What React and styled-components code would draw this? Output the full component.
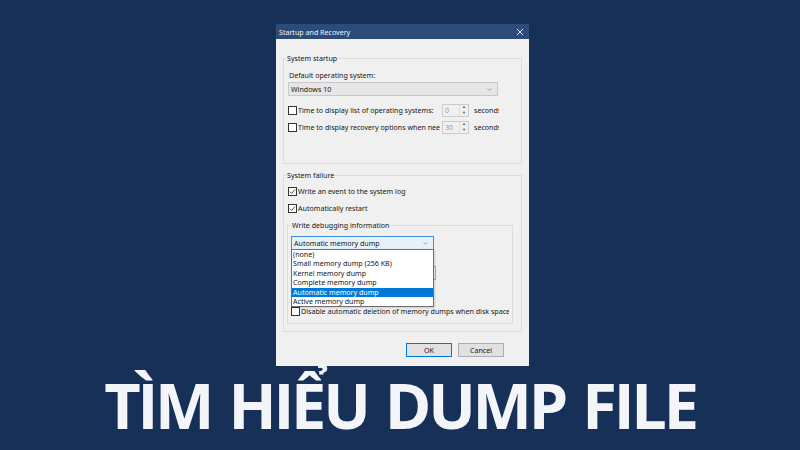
import styled, { createGlobalStyle } from "styled-components";

const GlobalStyle = createGlobalStyle`
  html, body {
    margin: 0;
    padding: 0;
    background: #163058;
  }
`;

const Page = styled.div`
  width: 800px;
  height: 450px;
  background: #163058;
  display: flex;
  flex-direction: column;
  align-items: center;
  padding-top: 24px;
  box-sizing: border-box;
  overflow: hidden;
`;

const Dialog = styled.div`
  width: 253px;
  height: 342px;
  margin-left: 5px;
  background: #f0f0f0;
  display: flex;
  flex-direction: column;
  font-family: "Noto Sans", "Open Sans", sans-serif;
  font-size: 7.1px;
  line-height: 10px;
  color: #161616;
  box-sizing: border-box;
`;

const TitleBar = styled.div`
  height: 15px;
  flex-shrink: 0;
  background: #2d4b79;
  color: #f2f4f8;
  display: flex;
  align-items: center;
  justify-content: space-between;
  padding: 0 6px 0 3px;
`;

const CloseIcon = styled.svg`
  width: 6px;
  height: 6px;
  stroke: #e8ecf2;
  stroke-width: 1;
`;

const Body = styled.div`
  padding: 14px 7px 0 7px;
  display: flex;
  flex-direction: column;
`;

const Group = styled.fieldset`
  margin: ${(p) => p.$mt || 0}px 0 0 ${(p) => p.$ml || 0}px;
  padding: 0 ${(p) => p.$px ?? 5}px 0 ${(p) => p.$px ?? 5}px;
  border: 1px solid #dcdcdc;
  min-width: 0;
  box-sizing: border-box;
  height: ${(p) => p.$h}px;
  width: ${(p) => (p.$w ? `${p.$w}px` : "auto")};
`;

const Legend = styled.legend`
  padding: 0 1px;
  margin-left: ${(p) => p.$ml ?? -3}px;
  line-height: 10px;
`;

const Label = styled.div`
  margin-top: ${(p) => p.$mt || 0}px;
  white-space: nowrap;
`;

const Select = styled.div`
  position: relative;
  margin-top: ${(p) => p.$mt || 0}px;
  margin-left: ${(p) => p.$ml || 0}px;
  width: ${(p) => p.$w}px;
  height: 14px;
  box-sizing: border-box;
  border: 1px solid ${(p) => (p.$open ? "#3c8fd9" : "#c8c8c8")};
  background: ${(p) => (p.$open ? "#e5f1fb" : "#e6e6e6")};
  display: flex;
  align-items: center;
  justify-content: space-between;
  padding: 0 5px 0 2px;
`;

const Chevron = styled.svg`
  width: 5px;
  height: 3px;
  stroke: #6a6a6a;
  stroke-width: 0.8;
  fill: none;
`;

const Row = styled.div`
  display: flex;
  align-items: center;
  height: ${(p) => p.$h || 12}px;
  margin-top: ${(p) => p.$mt || 0}px;
  margin-left: ${(p) => p.$ml || 0}px;
  white-space: nowrap;
`;

const Box = styled.span`
  width: 9px;
  height: 9px;
  box-sizing: border-box;
  border: 1px solid #333;
  background: #fff;
  margin-right: 1px;
  flex-shrink: 0;
  display: flex;
  align-items: center;
  justify-content: center;
`;

const Tick = styled.svg`
  width: 7px;
  height: 7px;
  stroke: #222;
  stroke-width: 0.9;
  fill: none;
`;

const RowText = styled.span`
  display: inline-block;
  width: ${(p) => (p.$w ? `${p.$w}px` : "auto")};
  overflow: hidden;
  white-space: nowrap;
`;

const Spin = styled.div`
  display: flex;
  align-items: center;
  width: 27px;
  height: 13px;
  box-sizing: border-box;
  border: 1px solid #cccccc;
  background: #f0f0f0;
  margin-left: 2px;
  color: #9a9a9a;
  padding-left: 2px;
`;

const SpinValue = styled.span`
  flex: 1;
`;

const SpinArrows = styled.div`
  width: 8px;
  height: 11px;
  border-left: 1px solid #e0e0e0;
  display: flex;
  flex-direction: column;
  align-items: center;
  justify-content: space-around;
  color: #555;
  font-size: 4px;
  line-height: 4px;
`;

const Seconds = styled.span`
  margin-left: 5px;
  width: 25px;
  overflow: hidden;
`;

const Popup = styled.ul`
  position: absolute;
  top: 12px;
  left: -1px;
  width: 143px;
  margin: 0;
  padding: 0;
  list-style: none;
  box-sizing: border-box;
  background: #fff;
  border: 1px solid #6e6e6e;
  box-shadow: 1px 1px 2px rgba(0, 0, 0, 0.15);
  z-index: 2;
`;

const Option = styled.li`
  height: 9.4px;
  line-height: 9.4px;
  padding-left: 1px;
  background: ${(p) => (p.$selected ? "#0078d7" : "transparent")};
  color: ${(p) => (p.$selected ? "#fff" : "#161616")};
`;

const TextBox = styled.div`
  width: 145px;
  height: 14px;
  box-sizing: border-box;
  border: 1px solid #a8a8a8;
  background: #fff;
  margin-top: 2px;
  padding-left: 2px;
  line-height: 12px;
`;

const Buttons = styled.div`
  display: flex;
  justify-content: flex-end;
  gap: 6px;
  margin-top: 11px;
  padding-right: 18px;
`;

const Button = styled.button`
  width: 46px;
  height: 14px;
  padding: 0;
  box-sizing: border-box;
  font: inherit;
  color: #161616;
  background: #e1e1e1;
  border: 1px solid ${(p) => (p.$primary ? "#0078d7" : "#adadad")};
`;

const Headline = styled.h1`
  margin: 7px 0 0 0;
  font-family: "Open Sans", "Noto Sans", sans-serif;
  font-weight: 700;
  font-size: 63px;
  line-height: 64px;
  letter-spacing: -3.2px;
  word-spacing: 4px;
  color: #f3f5f8;
  white-space: nowrap;
`;

function Checkbox({ checked }) {
  return (
    <Box>
      {checked && (
        <Tick viewBox="0 0 8 8">
          <path d="M1 4.2 L3 6.2 L7 1.6" />
        </Tick>
      )}
    </Box>
  );
}

function Caret() {
  return (
    <Chevron viewBox="0 0 6 4">
      <path d="M0.5 0.6 L3 3.1 L5.5 0.6" />
    </Chevron>
  );
}

const dumpTypes = [
  "(none)",
  "Small memory dump (256 KB)",
  "Kernel memory dump",
  "Complete memory dump",
  "Automatic memory dump",
  "Active memory dump",
];

function App() {
  return (
    <>
      <GlobalStyle />
      <Page>
        <Dialog>
          <TitleBar>
            <span>Startup and Recovery</span>
            <CloseIcon viewBox="0 0 6 6">
              <path d="M0 0 L6 6 M6 0 L0 6" />
            </CloseIcon>
          </TitleBar>
          <Body>
            <Group $h={111}>
              <Legend>System startup</Legend>
              <Label $mt={7}>Default operating system:</Label>
              <Select $mt={2} $ml={-1} $w={210}>
                <span>Windows 10</span>
                <Caret />
              </Select>
              <Row $h={14} $mt={7} $ml={-1}>
                <Checkbox />
                <RowText $w={142}>Time to display list of operating systems:</RowText>
                <Spin>
                  <SpinValue>0</SpinValue>
                  <SpinArrows>
                    <span>▲</span>
                    <span>▼</span>
                  </SpinArrows>
                </Spin>
                <Seconds>seconds</Seconds>
              </Row>
              <Row $h={14} $mt={3} $ml={-1}>
                <Checkbox />
                <RowText $w={142}>
                  Time to display recovery options when needed:
                </RowText>
                <Spin>
                  <SpinValue>30</SpinValue>
                  <SpinArrows>
                    <span>▲</span>
                    <span>▼</span>
                  </SpinArrows>
                </Spin>
                <Seconds>seconds</Seconds>
              </Row>
            </Group>

            <Group $h={162} $mt={6}>
              <Legend>System failure</Legend>
              <Row $mt={5} $ml={-1}>
                <Checkbox checked />
                <RowText>Write an event to the system log</RowText>
              </Row>
              <Row $mt={5} $ml={-1}>
                <Checkbox checked />
                <RowText>Automatically restart</RowText>
              </Row>

              <Group $h={104} $mt={6} $ml={-2} $w={226} $px={3}>
                <Legend $ml={0}>Write debugging information</Legend>
                <Select $open $mt={6} $w={143}>
                  <span>Automatic memory dump</span>
                  <Caret />
                  <Popup>
                    {dumpTypes.map((t) => (
                      <Option key={t} $selected={t === "Automatic memory dump"}>
                        {t}
                      </Option>
                    ))}
                  </Popup>
                </Select>
                <Label $mt={4}>Dump file:</Label>
                <TextBox>%SystemRoot%\MEMORY.DMP</TextBox>
                <Row $mt={9}>
                  <Checkbox checked />
                  <RowText>Overwrite any existing file</RowText>
                </Row>
                <Row $mt={4}>
                  <Checkbox />
                  <RowText $w={216}>
                    Disable automatic deletion of memory dumps when disk space is low
                  </RowText>
                </Row>
              </Group>
            </Group>

            <Buttons>
              <Button $primary>OK</Button>
              <Button>Cancel</Button>
            </Buttons>
          </Body>
        </Dialog>
        <Headline>TÌM HIỂU DUMP FILE</Headline>
      </Page>
    </>
  );
}

export default App;
